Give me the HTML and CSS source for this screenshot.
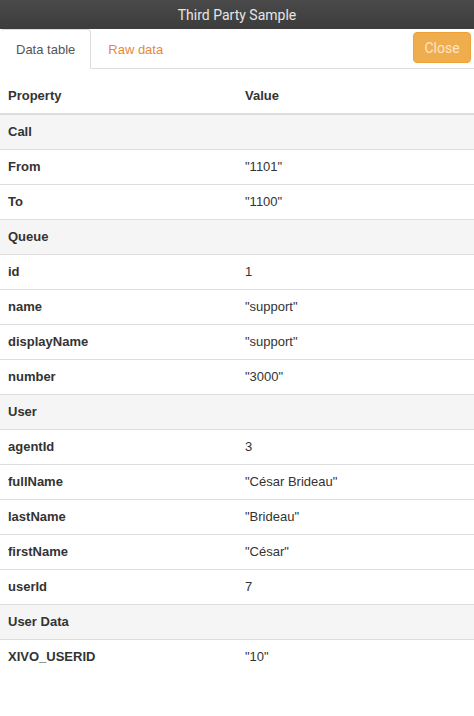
FILE: index.html
```html
<!DOCTYPE html>
<html>
<head>
<meta charset="utf-8">
<link rel="stylesheet" href="styles.css">
</head>
<body>
<header class="titlebar">Third Party Sample</header>
<nav class="tabs">
  <div class="tab active">Data table</div>
  <div class="tab">Raw data</div>
  <div class="spacer"></div>
  <button class="close-btn">Close</button>
</nav>
<table class="data">
  <thead>
    <tr><th>Property</th><th>Value</th></tr>
  </thead>
  <tbody>
    <tr class="section"><td>Call</td><td></td></tr>
    <tr><td class="key">From</td><td>"1101"</td></tr>
    <tr><td class="key">To</td><td>"1100"</td></tr>
    <tr class="section"><td>Queue</td><td></td></tr>
    <tr><td class="key">id</td><td>1</td></tr>
    <tr><td class="key">name</td><td>"support"</td></tr>
    <tr><td class="key">displayName</td><td>"support"</td></tr>
    <tr><td class="key">number</td><td>"3000"</td></tr>
    <tr class="section"><td>User</td><td></td></tr>
    <tr><td class="key">agentId</td><td>3</td></tr>
    <tr><td class="key">fullName</td><td>"César Brideau"</td></tr>
    <tr><td class="key">lastName</td><td>"Brideau"</td></tr>
    <tr><td class="key">firstName</td><td>"César"</td></tr>
    <tr><td class="key">userId</td><td>7</td></tr>
    <tr class="section"><td>User Data</td><td></td></tr>
    <tr><td class="key">XIVO_USERID</td><td>"10"</td></tr>
  </tbody>
</table>
</body>
</html>
```
FILE: styles.css
```css
* { box-sizing: border-box; }
html, body { margin: 0; padding: 0; background: #fff; }
body {
  font-family: "Liberation Sans", Arial, sans-serif;
  font-size: 13px;
  color: #333;
}
.titlebar {
  height: 29px;
  background: linear-gradient(#4a4a4a, #3c3c3c);
  color: #e6e6e6;
  font-family: Roboto, sans-serif;
  font-size: 14px;
  display: flex;
  align-items: center;
  justify-content: center;
}
.tabs {
  display: flex;
  align-items: flex-start;
  height: 40px;
  border-bottom: 1px solid #ddd;
}
.tab {
  padding: 10px 15px 9px 16px;
  line-height: 20px;
  color: #e8893a;
  border: 1px solid transparent;
  border-radius: 4px 4px 0 0;
  height: 40px;
}
.tab.active {
  color: #555;
  border-color: #ddd;
  border-left-color: transparent;
  border-bottom-color: #fff;
  background: #fff;
  padding-left: 15px;
  padding-right: 15px;
}
.spacer { flex: 1; }
.close-btn {
  margin: 3px 3px 0 0;
  height: 31px;
  width: 58px;
  padding: 0;
  background: #f0ad4e;
  border: 1px solid #eea236;
  border-radius: 4px;
  color: #fde7c4;
  font-family: Roboto, sans-serif;
  font-size: 14px;
}
.data {
  width: 100%;
  border-collapse: collapse;
  margin-top: 10px;
}
.data th, .data td {
  width: 50%;
  text-align: left;
  padding: 8px 8px;
  line-height: 18px;
  vertical-align: top;
}
.data th {
  font-weight: bold;
  border-bottom: 2px solid #ddd;
}
.data td { border-top: 1px solid #ddd; }
.data tbody tr:first-child td { border-top: 0; }
.data td.key { font-weight: bold; }
.data tr.section td {
  background: #f5f5f5;
  font-weight: bold;
}
```
